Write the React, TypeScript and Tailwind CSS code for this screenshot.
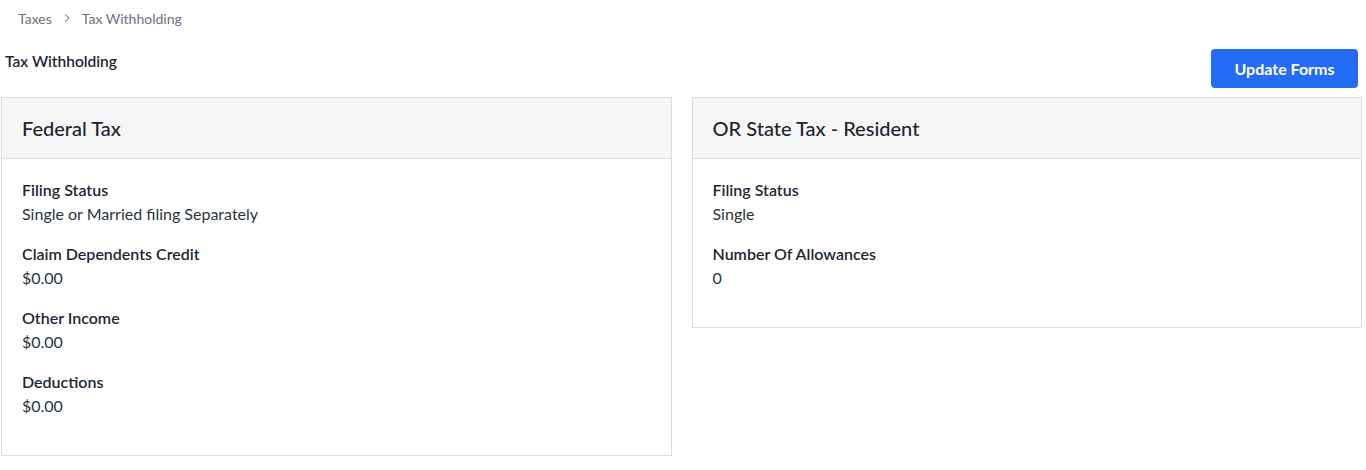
import React from 'react';
import { ChevronRight } from 'lucide-react';

type Field = { label: string; value: string };

const federal: Field[] = [
  { label: 'Filing Status', value: 'Single or Married filing Separately' },
  { label: 'Claim Dependents Credit', value: '$0.00' },
  { label: 'Other Income', value: '$0.00' },
  { label: 'Deductions', value: '$0.00' },
];

const state: Field[] = [
  { label: 'Filing Status', value: 'Single' },
  { label: 'Number Of Allowances', value: '0' },
];

function TaxCard({ title, fields }: { title: string; fields: Field[] }) {
  return (
    <div className="flex-1 border border-[#dcdcdc] bg-white">
      <div className="h-[61px] flex items-center px-5 bg-[#f6f6f6] border-b border-[#dcdcdc]">
        <h2 className="text-[20px] text-[#1d2733] font-medium">{title}</h2>
      </div>
      <div className="px-5 pt-[19px] pb-[21px]">
        {fields.map((f) => (
          <div key={f.label} className="mb-4">
            <div className="text-[16px] leading-6 font-semibold text-[#1d2733]">{f.label}</div>
            <div className="text-[16px] leading-6 text-[#2a3440]">{f.value}</div>
          </div>
        ))}
      </div>
    </div>
  );
}

export default function App() {
  return (
    <div className="min-h-[470px] bg-white pl-[1px] pr-[4px] font-['Lato',sans-serif]">
      {/* Breadcrumb */}
      <div className="flex items-center gap-2 pl-[17px] h-[36px] text-[14px] text-[#6b7280]">
        <span>Taxes</span>
        <ChevronRight size={14} strokeWidth={1.75} className="text-[#6b7280]" />
        <span>Tax Withholding</span>
      </div>

      {/* Title row */}
      <div className="flex items-start justify-between mt-[13px] mb-[9px]">
        <h1 className="pl-1 text-[15.5px] font-semibold text-[#1d2733] leading-6">Tax Withholding</h1>
        <button className="h-[39px] w-[147px] rounded-[4px] bg-[#246bf5] text-white text-[16px] font-bold mr-[4px]">
          Update Forms
        </button>
      </div>

      {/* Cards */}
      <div className="flex items-start gap-[20px]">
        <TaxCard title="Federal Tax" fields={federal} />
        <TaxCard title="OR State Tax - Resident" fields={state} />
      </div>
    </div>
  );
}
